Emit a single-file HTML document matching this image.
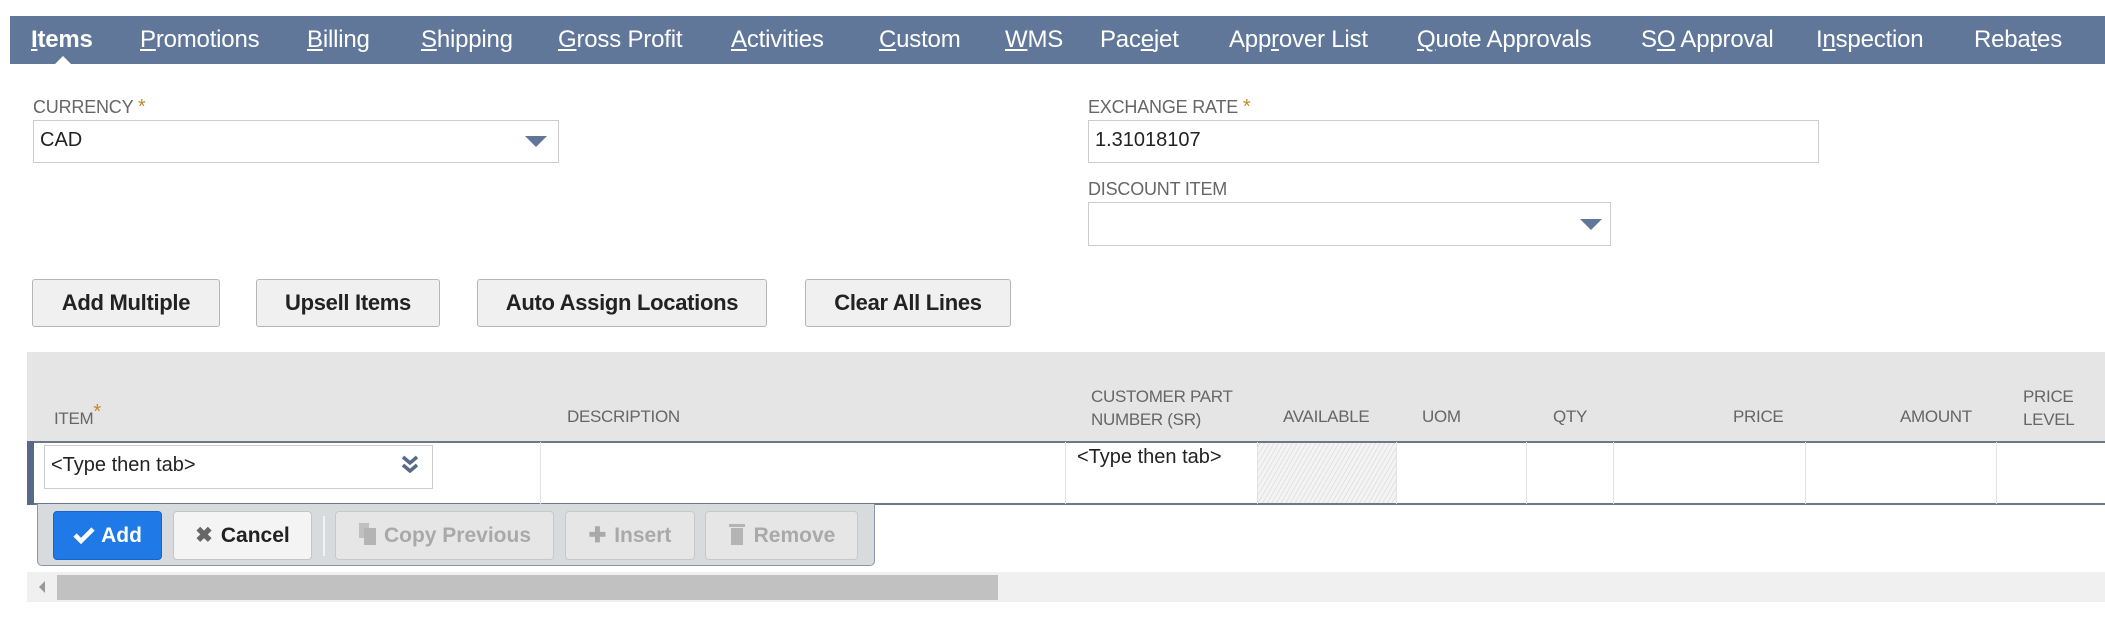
<!DOCTYPE html>
<html><head><meta charset="utf-8"><style>
*{box-sizing:border-box;margin:0;padding:0}
body{width:2105px;height:617px;background:#fff;font-family:"Liberation Sans",sans-serif;position:relative;overflow:hidden}
.a{position:absolute;white-space:nowrap}
.tabbar{left:10px;top:16px;width:2095px;height:48px;background:#607799}
.tab{top:26px;color:#fff;font-size:24px;letter-spacing:-0.2px}
.tab u{text-decoration:underline}
.lbl{font-size:18px;color:#666;letter-spacing:-0.2px}
.ast{color:#c28a2a;font-size:20px}
.box{border:1px solid #ccc;background:#fff}
.tri{width:0;height:0;border-left:11px solid transparent;border-right:11px solid transparent;border-top:11px solid #607799}
.btn{top:279px;height:48px;border:1px solid #b5b5b5;border-radius:3px;background:#f0f0f0;font-size:22px;font-weight:bold;color:#222;text-align:center;line-height:46px;letter-spacing:-0.3px}
.hd{font-size:17px;color:#666;letter-spacing:-0.3px}
.sep{top:442px;height:62px;width:1px;background:#e3e3e3}
.mb{top:511px;height:49px;border-radius:4px;font-size:21px;font-weight:bold;line-height:47px;text-align:center}
.dis{border:1px solid #c8c8c8;background:#e6e6e6;color:#a9a9a9}
</style></head><body>
<div class="a tabbar"></div>
<div class="a" style="left:55px;top:56px;width:0;height:0;border-left:8px solid transparent;border-right:8px solid transparent;border-bottom:8px solid #fff"></div>
<div class="a tab" style="left:31px;font-weight:bold"><u>I</u>tems</div>
<div class="a tab" style="left:140px"><u>P</u>romotions</div>
<div class="a tab" style="left:307px"><u>B</u>illing</div>
<div class="a tab" style="left:421px"><u>S</u>hipping</div>
<div class="a tab" style="left:558px"><u>G</u>ross Profit</div>
<div class="a tab" style="left:731px"><u>A</u>ctivities</div>
<div class="a tab" style="left:879px"><u>C</u>ustom</div>
<div class="a tab" style="left:1005px"><u>W</u>MS</div>
<div class="a tab" style="left:1100px">Pac<u>e</u>jet</div>
<div class="a tab" style="left:1229px">App<u>r</u>over List</div>
<div class="a tab" style="left:1417px"><u>Q</u>uote Approvals</div>
<div class="a tab" style="left:1641px">S<u>O</u> Approval</div>
<div class="a tab" style="left:1816px">I<u>n</u>spection</div>
<div class="a tab" style="left:1974px">Reba<u>t</u>es</div>

<div class="a lbl" style="left:33px;top:96px">CURRENCY <span class="ast">*</span></div>
<div class="a box" style="left:33px;top:120px;width:526px;height:43px"></div>
<div class="a" style="left:40px;top:129px;font-size:20px;color:#222">CAD</div>
<div class="a tri" style="left:525px;top:136px"></div>

<div class="a lbl" style="left:1088px;top:96px">EXCHANGE RATE <span class="ast">*</span></div>
<div class="a box" style="left:1088px;top:120px;width:731px;height:43px"></div>
<div class="a" style="left:1095px;top:129px;font-size:20px;color:#222">1.31018107</div>
<div class="a lbl" style="left:1088px;top:179px">DISCOUNT ITEM</div>
<div class="a box" style="left:1088px;top:202px;width:523px;height:44px"></div>
<div class="a tri" style="left:1580px;top:219px"></div>

<div class="a btn" style="left:32px;width:188px">Add Multiple</div>
<div class="a btn" style="left:256px;width:184px">Upsell Items</div>
<div class="a btn" style="left:477px;width:290px">Auto Assign Locations</div>
<div class="a btn" style="left:805px;width:206px">Clear All Lines</div>

<div class="a" style="left:27px;top:352px;width:2078px;height:89px;background:#e5e5e5"></div>
<div class="a hd" style="left:54px;top:407px">ITEM<span class="ast" style="position:relative;top:-6px">*</span></div>
<div class="a hd" style="left:567px;top:407px">DESCRIPTION</div>
<div class="a hd" style="left:1091px;top:385px;line-height:23px">CUSTOMER PART<br>NUMBER (SR)</div>
<div class="a hd" style="left:1283px;top:407px">AVAILABLE</div>
<div class="a hd" style="left:1422px;top:407px">UOM</div>
<div class="a hd" style="left:1553px;top:407px">QTY</div>
<div class="a hd" style="left:1733px;top:407px">PRICE</div>
<div class="a hd" style="left:1900px;top:407px">AMOUNT</div>
<div class="a hd" style="left:2023px;top:385px;line-height:23px">PRICE<br>LEVEL</div>
<div class="a" style="left:27px;top:441px;width:2078px;height:2px;background:#6b7887"></div>
<div class="a" style="left:27px;top:503px;width:2078px;height:2px;background:#6b7887"></div>
<div class="a" style="left:27px;top:441px;width:7px;height:64px;background:#56698a"></div>
<div class="a" style="left:1257px;top:443px;width:139px;height:60px;background:repeating-linear-gradient(-60deg,#f4f4f4 0 3px,#e2e2e2 3px 4px)"></div>
<div class="a sep" style="left:540px"></div>
<div class="a sep" style="left:1065px"></div>
<div class="a sep" style="left:1257px"></div>
<div class="a sep" style="left:1396px"></div>
<div class="a sep" style="left:1526px"></div>
<div class="a sep" style="left:1613px"></div>
<div class="a sep" style="left:1805px"></div>
<div class="a sep" style="left:1996px"></div>
<div class="a box" style="left:44px;top:445px;width:389px;height:44px"></div>
<div class="a" style="left:51px;top:454px;font-size:20px;color:#222">&lt;Type then tab&gt;</div>
<svg class="a" style="left:400px;top:455px" width="20" height="20" viewBox="0 0 20 20"><path d="M3 2l7 6 7-6M3 10l7 6 7-6" stroke="#56698a" stroke-width="3.5" fill="none"/></svg>
<div class="a" style="left:1077px;top:446px;font-size:20px;color:#222">&lt;Type then tab&gt;</div>

<div class="a" style="left:37px;top:504px;width:838px;height:62px;background:#d8dbde;border:1px solid #8a96a3;border-top:none;border-radius:0 0 5px 5px"></div>
<div class="a mb" style="left:53px;width:109px;background:#1f7ae8;color:#fff;border:1px solid #1566c8"><svg width="22" height="18" viewBox="0 0 22 18" style="vertical-align:-2px;margin-right:6px"><path d="M2 9l6 6L20 3" stroke="#fff" stroke-width="4.5" fill="none"/></svg>Add</div>
<div class="a mb" style="left:173px;width:139px;background:#f4f4f4;color:#222;border:1px solid #c5c5c5"><span style="color:#666;margin-right:8px">✖</span>Cancel</div>
<div class="a" style="left:323px;top:516px;width:2px;height:40px;background:#f2f2f2"></div>
<div class="a mb dis" style="left:335px;width:219px"><svg width="20" height="24" viewBox="0 0 20 24" style="vertical-align:-4px;margin-right:6px"><rect x="1" y="1" width="10" height="15" fill="#c0c0c0"/><rect x="6" y="6" width="12" height="17" fill="#b4b4b4"/></svg>Copy Previous</div>
<div class="a mb dis" style="left:565px;width:130px"><span style="margin-right:8px">✚</span>Insert</div>
<div class="a mb dis" style="left:705px;width:153px"><svg width="18" height="24" viewBox="0 0 18 24" style="vertical-align:-4px;margin-right:8px"><rect x="1" y="2" width="16" height="3" fill="#b4b4b4"/><rect x="3" y="6" width="12" height="17" fill="#b4b4b4"/></svg>Remove</div>

<div class="a" style="left:27px;top:572px;width:2078px;height:30px;background:#f0f0f0"></div>
<div class="a" style="left:57px;top:575px;width:941px;height:25px;background:#c1c1c1"></div>
<div class="a" style="left:39px;top:581px;width:0;height:0;border-top:6px solid transparent;border-bottom:6px solid transparent;border-right:6px solid #999"></div>
</body></html>
